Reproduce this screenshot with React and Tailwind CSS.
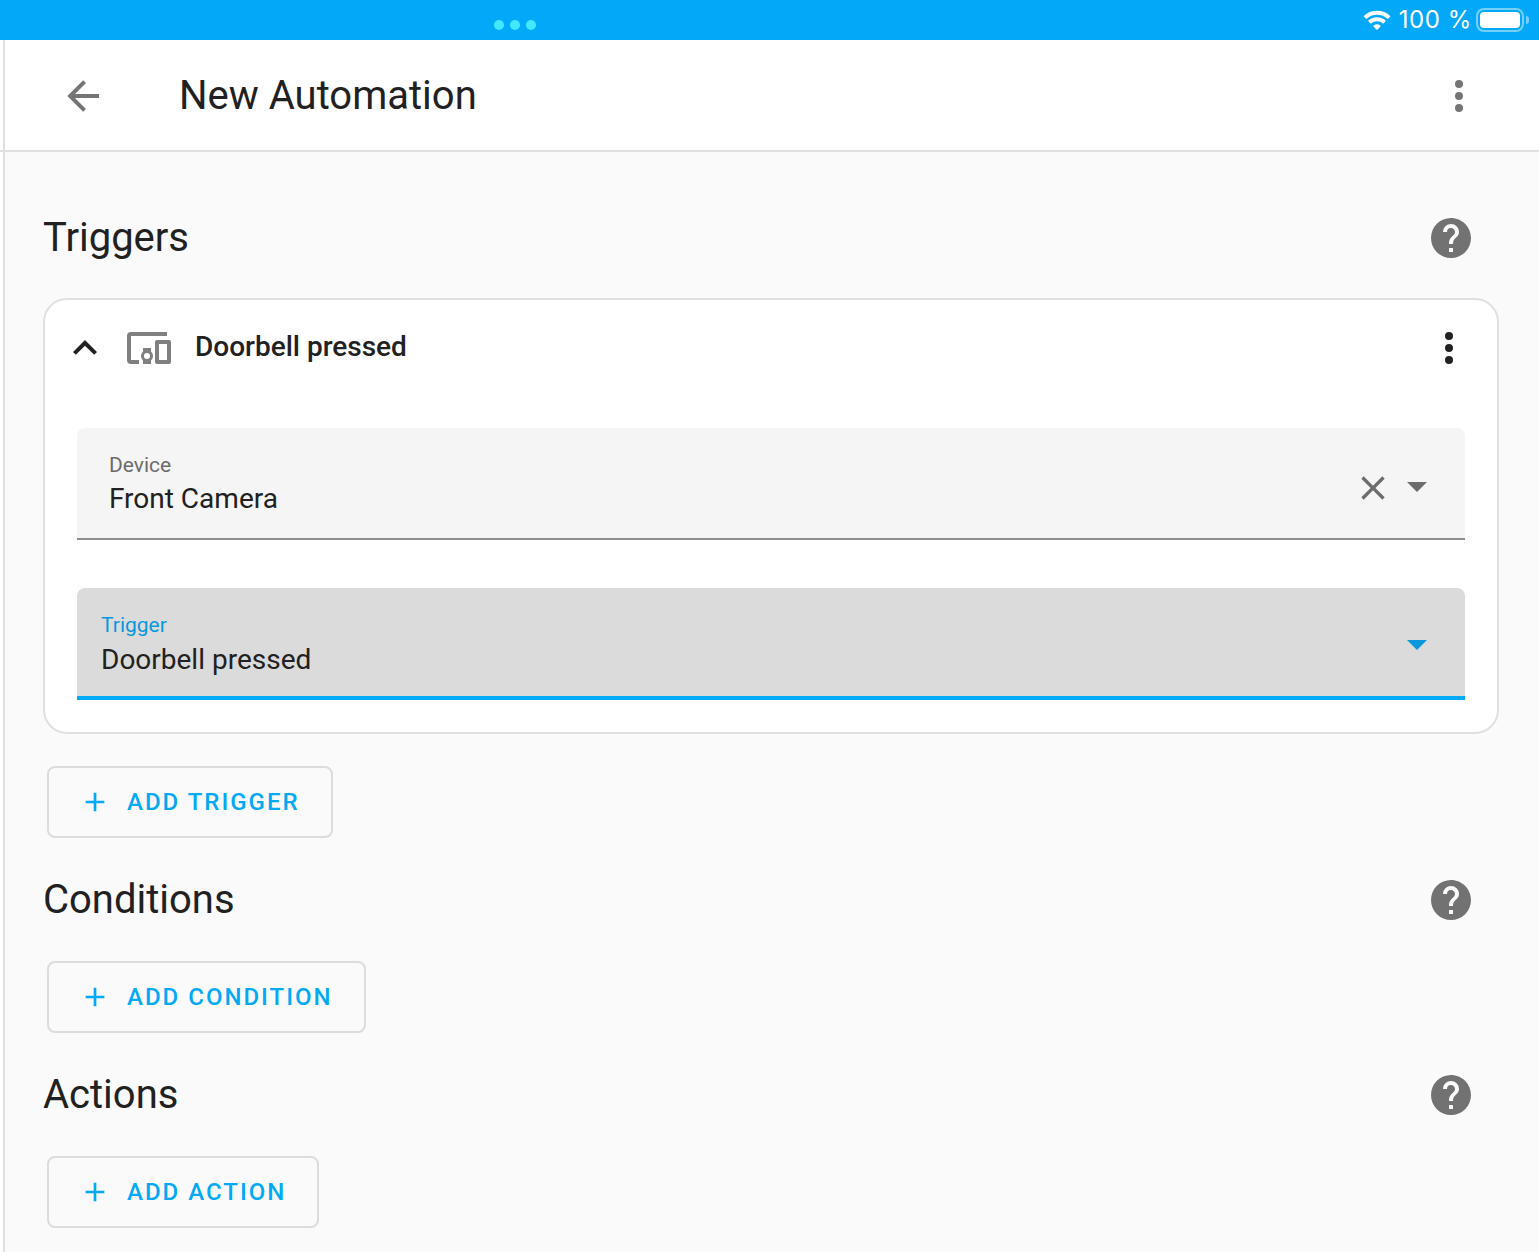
import React, { useState } from 'react';

const icons = {
    arrowLeft: 'M20,11V13H8L13.5,18.5L12.08,19.92L4.16,12L12.08,4.08L13.5,5.5L8,11H20Z',
    dots: 'M12,16A2,2 0 0,1 14,18A2,2 0 0,1 12,20A2,2 0 0,1 10,18A2,2 0 0,1 12,16M12,10A2,2 0 0,1 14,12A2,2 0 0,1 12,14A2,2 0 0,1 10,12A2,2 0 0,1 12,10M12,4A2,2 0 0,1 14,6A2,2 0 0,1 12,8A2,2 0 0,1 10,6A2,2 0 0,1 12,4Z',
    help: 'M15.07,11.25L14.17,12.17C13.45,12.89 13,13.5 13,15H11V14.5C11,13.39 11.45,12.39 12.17,11.67L13.41,10.41C13.78,10.05 14,9.55 14,9C14,7.89 13.1,7 12,7A2,2 0 0,0 10,9H8A4,4 0 0,1 12,5A4,4 0 0,1 16,9C16,9.88 15.64,10.67 15.07,11.25M13,19H11V17H13M12,2A10,10 0 0,0 2,12A10,10 0 0,0 12,22A10,10 0 0,0 22,12C22,6.47 17.5,2 12,2Z',
    chevronUp: 'M7.41,15.41L12,10.83L16.59,15.41L18,14L12,8L6,14L7.41,15.41Z',
    devices: 'M3 6H21V4H3A2 2 0 0 0 1 6V18A2 2 0 0 0 3 20H7V18H3M13 12H9V13.78A3 3 0 0 0 8 16C8 16.88 8.39 17.67 9 18.22V20H13V18.22C13.61 17.67 14 16.88 14 16S13.61 14.33 13 13.78M11 17.5A1.5 1.5 0 1 1 12.5 16 1.5 1.5 0 0 1 11 17.5M22 8H16A1 1 0 0 0 15 9V19A1 1 0 0 0 16 20H22A1 1 0 0 0 23 19V9A1 1 0 0 0 22 8M21 18H17V10H21Z',
    close: 'M19,6.41L17.59,5L12,10.59L6.41,5L5,6.41L10.59,12L5,17.59L6.41,19L12,13.41L17.59,19L19,17.59L13.41,12L19,6.41Z',
    menuDown: 'M7,10L12,15L17,10H7Z',
    plus: 'M19,13H13V19H11V13H5V11H11V5H13V11H19V13Z',
};

const Icon = ({ name, className = 'size-12' }) => (
    <svg viewBox="0 0 24 24" fill="currentColor" className={`shrink-0 ${className}`} aria-hidden="true">
        <path d={icons[name]} />
    </svg>
);

const StatusBar = () => (
    <div className="flex h-10 items-center justify-between bg-[#03a9f8] pr-[10px] pl-[494px] text-white">
        <div className="flex gap-[6px] pt-[10px]">
            <span className="size-[10px] rounded-full bg-[#42e8ff]" />
            <span className="size-[10px] rounded-full bg-[#42e8ff]" />
            <span className="size-[10px] rounded-full bg-[#42e8ff]" />
        </div>
        <div className="flex items-center">
            <svg viewBox="0 0 28 20" className="mr-2 h-5 w-7" fill="none" stroke="currentColor" strokeWidth="4" aria-hidden="true">
                <path d="M1.9 7.6a17.4 17.4 0 0 1 24.2 0" />
                <path d="M6.4 12.3a11 11 0 0 1 15.2 0" />
                <path d="M13.4 19.6l-2.9-3q-.5-.6.2-1.1a5.4 5.4 0 0 1 6.6 0q.7.5.2 1.1l-2.9 3q-.6.6-1.2 0z" fill="currentColor" stroke="none" />
            </svg>
            <span className="font-['Inter'] text-2xl leading-10 tracking-wide">100 %</span>
            <div className="ml-1 flex h-6 w-12 rounded-[8px] border-2 border-white/45 p-[2px]">
                <div className="flex-1 rounded-[4px] bg-white" />
            </div>
            <div className="ml-[2px] h-2 w-[3px] rounded-r-full bg-white/45" />
        </div>
    </div>
);

const SectionHeading = ({ title }) => (
    <div className="flex h-24 items-center justify-between">
        <h2 className="text-[40px] leading-12">{title}</h2>
        <button aria-label={`Help for ${title}`} className="flex size-24 items-center justify-center text-[#727272]">
            <Icon name="help" />
        </button>
    </div>
);

const AddButton = ({ children }) => (
    <button className="ml-1 flex h-[72px] items-center gap-4 rounded-[8px] border-2 border-[#dcdcdc] pr-[31px] pl-[30px] text-2xl font-medium tracking-[2px] text-[#03a9f4] uppercase">
        <Icon name="plus" className="size-8" />
        {children}
    </button>
);

const TriggerCard = () => {
    const [device, setDevice] = useState('Front Camera');
    const [trigger, setTrigger] = useState('Doorbell pressed');

    return (
        <div className="mt-3 mb-8 rounded-[24px] border-2 border-[#e0e0e0] bg-white">
            <div className="flex h-24 items-center pl-4">
                <button aria-label="Collapse" className="flex size-12 items-center justify-center">
                    <Icon name="chevronUp" />
                </button>
                <Icon name="devices" className="ml-4 size-12 text-[#808080]" />
                <h3 className="ml-[22px] flex-1 pb-[2px] text-[28px] leading-10 font-medium">Doorbell pressed</h3>
                <button aria-label="Trigger menu" className="flex size-24 items-center justify-center">
                    <Icon name="dots" />
                </button>
            </div>

            <div className="flex flex-col gap-12 p-8">
                <div className="flex h-28 rounded-t-[8px] border-b-2 border-[#8e8e8e] bg-[#f5f5f5] pr-6 pl-8">
                    <div className="flex-1 pt-[23px]">
                        <label htmlFor="device" className="block text-[21px] leading-7 text-[#6c6c6c]">Device</label>
                        <input
                            id="device"
                            type="text"
                            value={device}
                            onChange={(e) => setDevice(e.target.value)}
                            className="block h-10 w-full bg-transparent text-[28px] outline-none"
                        />
                    </div>
                    <div className="flex items-center pt-[6px] text-[#6c6c6c]">
                        <button aria-label="Clear" onClick={() => setDevice('')} className="pt-1">
                            <Icon name="close" className="size-10" />
                        </button>
                        <button aria-label="Show devices">
                            <Icon name="menuDown" />
                        </button>
                    </div>
                </div>

                <div className="relative h-28 rounded-t-[8px] border-b-4 border-[#03a9f4] bg-[#dbdbdb] pt-[23px]">
                    <label htmlFor="trigger" className="block px-6 text-[21px] leading-7 text-[#0898db]">Trigger</label>
                    <select
                        id="trigger"
                        value={trigger}
                        onChange={(e) => setTrigger(e.target.value)}
                        className="block h-[38px] w-full appearance-none bg-transparent px-6 text-[28px] outline-none"
                    >
                        <option>Doorbell pressed</option>
                        <option>Motion detected</option>
                    </select>
                    <Icon name="menuDown" className="pointer-events-none absolute top-8 right-6 size-12 text-[#0898db]" />
                </div>
            </div>
        </div>
    );
};

export default function App() {
    return (
        <div className="flex min-h-screen flex-col bg-[#fafafa] font-['Roboto',sans-serif] text-[#212121]">
            <StatusBar />
            <div className="flex flex-1">
                {/* edge of the collapsed sidebar */}
                <aside className="w-[5px] shrink-0 border-r-2 border-[#e0e0e0] bg-white">
                    <div className="h-28 border-b-2 border-[#e0e0e0]" />
                </aside>

                <div className="min-w-0 flex-1">
                    <header className="flex h-28 items-center border-b-2 border-[#e0e0e0] bg-white pt-[2px] pr-8 pl-[30px]">
                        <button aria-label="Back" className="flex size-24 items-center justify-center text-[#757575]">
                            <Icon name="arrowLeft" />
                        </button>
                        <h1 className="ml-12 flex-1 text-[40px] leading-12">New Automation</h1>
                        <button aria-label="Menu" className="flex size-24 items-center justify-center text-[#757575]">
                            <Icon name="dots" />
                        </button>
                    </header>

                    <main className="flex flex-col gap-[14px] pt-[38px] pr-10 pb-6 pl-[38px]">
                        <section>
                            <SectionHeading title="Triggers" />
                            <TriggerCard />
                            <AddButton>Add trigger</AddButton>
                        </section>
                        <section>
                            <SectionHeading title="Conditions" />
                            <div className="mt-[13px]">
                                <AddButton>Add condition</AddButton>
                            </div>
                        </section>
                        <section>
                            <SectionHeading title="Actions" />
                            <div className="mt-[13px]">
                                <AddButton>Add action</AddButton>
                            </div>
                        </section>
                    </main>
                </div>
            </div>
        </div>
    );
}
